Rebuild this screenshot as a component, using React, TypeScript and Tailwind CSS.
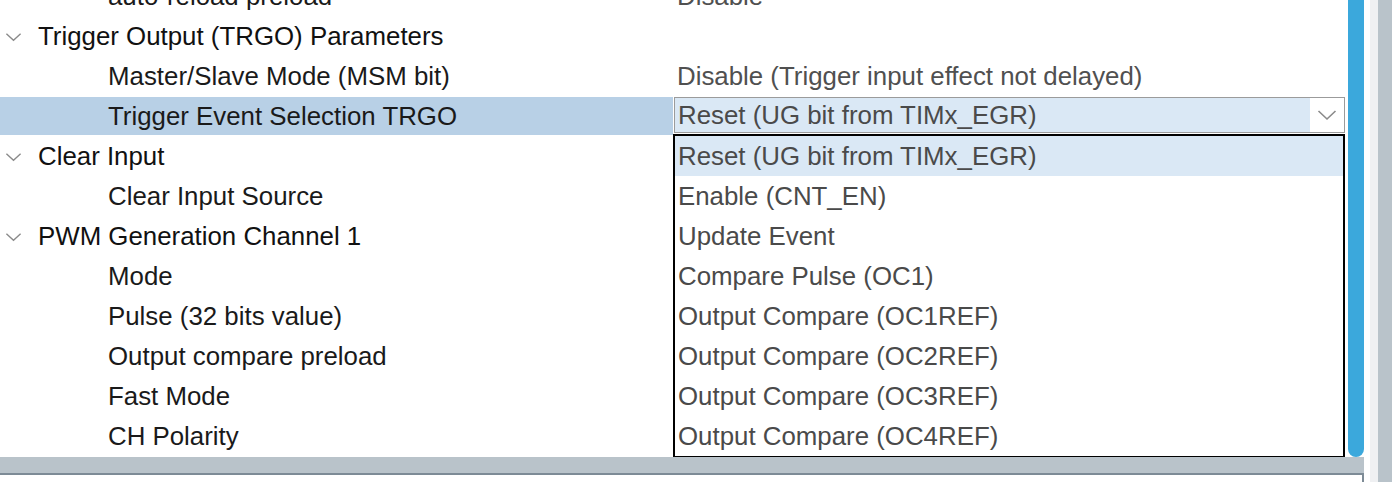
import { useState } from 'react';

type Row = {
  label: string;
  value?: string;
  group?: boolean;
  select?: boolean;
};

// values of the rows below the open popup are hidden by it, so they stay empty
const rows: Row[] = [
  { label: 'auto-reload preload', value: 'Disable' },
  { label: 'Trigger Output (TRGO) Parameters', group: true },
  { label: 'Master/Slave Mode (MSM bit)', value: 'Disable (Trigger input effect not delayed)' },
  { label: 'Trigger Event Selection TRGO', select: true },
  { label: 'Clear Input', group: true },
  { label: 'Clear Input Source' },
  { label: 'PWM Generation Channel 1', group: true },
  { label: 'Mode' },
  { label: 'Pulse (32 bits value)' },
  { label: 'Output compare preload' },
  { label: 'Fast Mode' },
  { label: 'CH Polarity' },
];

const options = [
  'Reset (UG bit from TIMx_EGR)',
  'Enable (CNT_EN)',
  'Update Event',
  'Compare Pulse (OC1)',
  'Output Compare (OC1REF)',
  'Output Compare (OC2REF)',
  'Output Compare (OC3REF)',
  'Output Compare (OC4REF)',
];

const Chevron = ({ className }: { className?: string }) => (
  <svg width="20" height="12" viewBox="0 0 20 12" className={className}>
    <polyline points="1.5,2 10,10 18.5,2" fill="none" stroke="#8a8a8a" strokeWidth="1.6" />
  </svg>
);

const SelectCell = () => {
  const [selected] = useState(0);
  return (
    <div className="relative h-full">
      {/* closed select box */}
      <div className="ml-[1px] mt-[1px] flex h-[36px] w-[671px] border border-[#9b9b9b] bg-[#dae8f5]">
        <div className="flex flex-1 items-center pl-[3px] pt-[1px] text-[#4a4a4a]">{options[selected]}</div>
        <div className="flex w-[34px] items-center justify-center bg-white">
          <Chevron />
        </div>
      </div>

      {/* open popup list */}
      <div className="absolute left-0 top-[37px] z-10 w-[672px] border-2 border-black bg-white">
        {options.map((opt, i) => (
          <div
            key={opt}
            className={`flex h-[40px] items-center pl-[3px] pt-[1px] text-[#4a4a4a] ${i === selected ? 'bg-[#dae8f5]' : ''}`}
          >
            {opt}
          </div>
        ))}
      </div>
    </div>
  );
};

const PropertyRow = ({ row }: { row: Row }) => {
  if (row.group) {
    return (
      <div className="flex h-[40px] items-center pt-[1px]">
        <Chevron className="ml-[4px] mr-[15px] h-[10px] w-[19px]" />
        <span className="text-[#111]">{row.label}</span>
      </div>
    );
  }
  return (
    <div className="flex h-[40px]">
      <div className={`flex w-[673px] items-center pl-[108px] pt-[1px] text-[#1a1a1a] ${row.select ? 'my-[1px] bg-[#b8d0e6]' : ''}`}>
        {row.label}
      </div>
      <div className="flex-1">
        {row.select ? (
          <SelectCell />
        ) : (
          <div className="flex h-full items-center pl-[4px] pt-[1px] text-[#505050]">{row.value}</div>
        )}
      </div>
    </div>
  );
};

export default function App() {
  return (
    <div className="flex h-[482px] w-[1396px] overflow-hidden bg-white font-['Liberation_Sans',Arial,sans-serif] text-[25.85px] leading-none">
      <div className="flex w-[1364px] flex-col">
        {/* properties table with scrollbar */}
        <div className="flex h-[457px]">
          <div className="w-[1348px] overflow-hidden">
            <div className="-mt-[24px]">
              {rows.map((row) => (
                <PropertyRow key={row.label} row={row} />
              ))}
            </div>
          </div>
          <div className="w-[16px] rounded-b-full bg-[#3ba8dc]" />
        </div>
        <div className="h-[16px] bg-[#b9c3ca]" />
        <div className="flex-1 border-r-2 border-t-2 border-[#7d8b96] bg-white" />
      </div>
      <div className="w-[6px] bg-white" />
      <div className="w-[8px] bg-[#eff0f2]" />
      <div className="w-[14px] bg-[#b9c3ca]" />
      <div className="flex-1 bg-white" />
    </div>
  );
}
